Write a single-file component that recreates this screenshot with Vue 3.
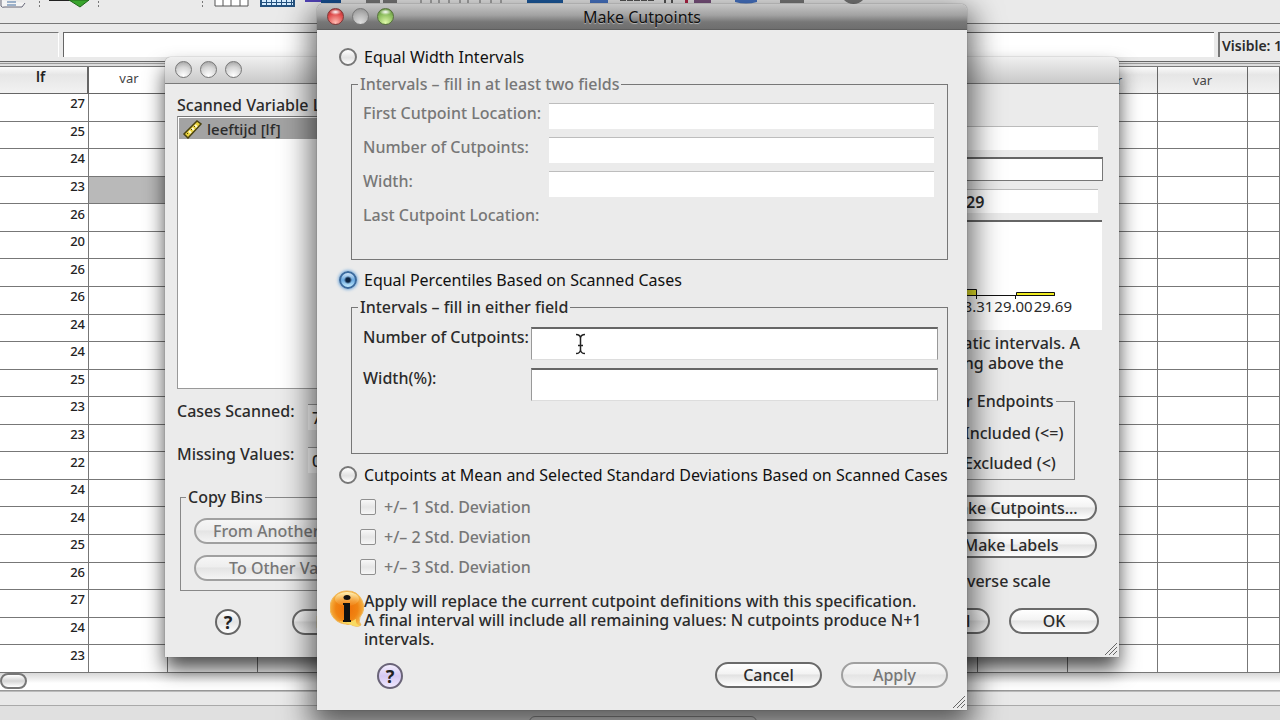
<script setup>
import { ref } from 'vue'

const values = [27, 25, 24, 23, 26, 20, 26, 26, 24, 24, 25, 23, 23, 22, 24, 24, 25, 26, 27, 24, 23]
const emptyColumns = 14
const selectedRow = 3

const method = ref('percentiles')
const fixedFields = [
  { id: 'first', label: 'First Cutpoint Location:' },
  { id: 'count', label: 'Number of Cutpoints:' },
  { id: 'width', label: 'Width:' },
]
const percentileFields = [
  { id: 'pcount', label: 'Number of Cutpoints:' },
  { id: 'pwidth', label: 'Width(%):' },
]
</script>

<template>
  <div class="desktop">
    <div class="toolbar">
      <svg class="tools" width="960" height="10" viewBox="0 0 960 10" aria-hidden="true">
        <path d="M1 0V6Q2 8 5 7H22L25 3" fill="#f4f4f4" stroke="#667" />
        <path d="M7 2h9M7 5h9" stroke="#446fa0" />
        <g fill="#777">
          <path d="M39 1h1v2h-1zM39 5h1v2h-1zM98 1h1v2h-1zM98 5h1v2h-1zM202 1h1v2h-1zM202 5h1v2h-1z" />
          <path d="M366 0h14v3h-14zM383 0h14v3h-14zM780 0h24v3h-24zM844 0h19q-4 4-9.500 4t-9.500-4z" />
        </g>
        <path d="M49 0h27" stroke="#222" stroke-width="2" />
        <path d="M69 0h20l-9 7z" fill="#39a52d" stroke="#20661b" />
        <path d="M215 0v6h33V0M223 0v6M231 0v6M240 0v6" fill="#fff" stroke="#555" />
        <path d="M260 0h35v7h-35z" fill="#24527f" />
        <path d="M262 1h31M262 4h31" stroke="#d4ecff" stroke-width="2" stroke-dasharray="4 1" />
        <path d="M305 0h16v2h-16z" fill="#5142b7" />
        <path d="M321 0h20v3h-20z" fill="#174f91" />
        <path d="M421 0v3M431 0v3M439 0v3M449 0v3M460 0v3M468 0v3M480 0v3M491 0v3M501 0v3" stroke="#666" />
        <path d="M527 0h36v3h-36z" fill="#1c5a9e" />
        <path d="M590 0h18v3h-18zM735 0h22v2q-11 3-22 0z" fill="#4774c4" />
        <path d="M620 0h34M665 0v3M672 0v3" stroke="#555" stroke-width="2" stroke-dasharray="6 1" />
        <path d="M685 0h3v3h-3z" fill="#b22345" />
        <path d="M694 0h17v3h-17z" fill="#79517d" />
      </svg>
    </div>
    <div class="formula">
      <div class="cellname"></div>
      <input class="cellvalue" type="text" aria-label="Cell value" />
      <div class="visible">Visible: 1</div>
    </div>
    <div class="rule"></div>

    <div class="sheet">
      <table>
        <colgroup>
          <col class="c-first" />
          <col class="c-second" />
          <col v-for="n in emptyColumns - 2" :key="n" class="c-var" />
          <col />
        </colgroup>
        <thead>
          <tr>
            <th class="lf">lf</th>
            <th v-for="n in emptyColumns" :key="n" :class="{ plain: n === 1 }">{{ n < emptyColumns ? 'var' : '' }}</th>
          </tr>
        </thead>
        <tbody>
          <tr v-for="(v, r) in values" :key="r">
            <td class="num">{{ v }}</td>
            <td v-for="n in emptyColumns" :key="n" :class="{ selected: n === 1 && r === selectedRow }"></td>
          </tr>
        </tbody>
      </table>
    </div>
    <div class="scroll"><span class="thumb"></span></div>
    <div class="status"></div>
    <div class="status low"></div>

    <section class="window back" aria-label="Visual Binning">
      <header class="titlebar idle">
        <span class="lights"><i class="light"></i><i class="light"></i><i class="light"></i></span>
      </header>
      <div class="back-body">
        <div class="left">
          <div class="line">Scanned Variable List:</div>
          <div class="list">
            <div class="item">
              <svg width="20" height="20" viewBox="0 0 20 20" aria-hidden="true">
                <path d="M2 15L15 2l4 3L6 19z" fill="#e9d23c" stroke="#4a4210" stroke-width="1.500" />
                <path d="M7 12l2 2M10 9l2 2M13 6l2 2" stroke="#fffbd0" stroke-width="2" />
                <path d="M5 14l1 1M9 10l1 1M12 7l1 1" stroke="#4a4210" />
              </svg>
              leeftijd [lf]
            </div>
          </div>
          <div class="stat"><label for="scanned">Cases Scanned:</label><input id="scanned" type="text" value="74" readonly /></div>
          <div class="stat"><label for="missing">Missing Values:</label><input id="missing" type="text" value="0" readonly /></div>
          <fieldset class="copy">
            <legend>Copy Bins</legend>
            <button type="button" class="pill" disabled>From Another Variable...</button>
            <button type="button" class="pill" disabled>To Other Variables...</button>
          </fieldset>
          <div class="left-foot">
            <button type="button" class="help">?</button>
            <button type="button" class="pill">Reset</button>
          </div>
        </div>
        <div class="right">
          <input class="soft" type="text" aria-label="Variable name" readonly />
          <input class="hard" type="text" aria-label="Variable label" />
          <input class="soft max" type="text" aria-label="Maximum" value="29" readonly />
          <div class="chart">
            <svg width="199" height="80" viewBox="0 0 199 80" aria-hidden="true">
              <path d="M0 73.500H155" stroke="#111" />
              <path d="M20 67.500H76.500V73.500H20z" fill="#e8e52a" stroke="#111" />
              <path d="M116.500 70.500H154.500V73.500H116.500z" fill="#f0ec20" stroke="#111" />
              <path d="M76.500 73v4M115.500 73v4" stroke="#111" />
            </svg>
            <div class="ticks"><span>28.31</span><span>29.00</span><span>29.69</span></div>
          </div>
          <p class="note">automatic intervals. A<br />including above the</p>
          <fieldset class="ends">
            <legend>Upper Endpoints</legend>
            <label><input type="radio" name="ends" checked />Included (&lt;=)</label>
            <label><input type="radio" name="ends" />Excluded (&lt;)</label>
          </fieldset>
          <button type="button" class="pill make">Make Cutpoints...</button>
          <button type="button" class="pill make">Make Labels</button>
          <label class="reverse"><input type="checkbox" />Reverse scale</label>
          <div class="right-foot">
            <button type="button" class="pill">Cancel</button>
            <button type="button" class="pill">OK</button>
          </div>
        </div>
      </div>
      <svg class="grip" width="14" height="14" viewBox="0 0 14 14" aria-hidden="true">
        <path d="M1 13L13 1M5 13l8-8M9 13l4-4" stroke="#666" />
      </svg>
    </section>

    <section class="window front" role="dialog" aria-label="Make Cutpoints">
      <header class="titlebar">
        <span class="lights"><i class="light red"></i><i class="light"></i><i class="light green"></i></span>
        <span class="title">Make Cutpoints</span>
      </header>
      <form class="front-body" @submit.prevent>
        <label class="choice"><input v-model="method" type="radio" name="method" value="width" />Equal Width Intervals</label>
        <fieldset class="group fixed" disabled>
          <legend>Intervals – fill in at least two fields</legend>
          <div v-for="f in fixedFields" :key="f.id" class="field">
            <label :for="f.id">{{ f.label }}</label><input :id="f.id" type="text" />
          </div>
          <div class="field"><span>Last Cutpoint Location:</span></div>
        </fieldset>
        <label class="choice second"><input v-model="method" type="radio" name="method" value="percentiles" />Equal Percentiles Based on Scanned Cases</label>
        <fieldset class="group percent">
          <legend>Intervals – fill in either field</legend>
          <div v-for="f in percentileFields" :key="f.id" class="field">
            <label :for="f.id">{{ f.label }}</label><input :id="f.id" type="text" />
          </div>
        </fieldset>
        <label class="choice third"><input v-model="method" type="radio" name="method" value="deviations" />Cutpoints at Mean and Selected Standard Deviations Based on Scanned Cases</label>
        <div class="checks">
          <label v-for="n in 3" :key="n"><input type="checkbox" disabled />+/– {{ n }} Std. Deviation</label>
        </div>
        <div class="info">
          <svg width="34" height="38" viewBox="0 0 34 38" aria-hidden="true">
            <defs>
              <radialGradient id="orb" cx="50%" cy="50%" r="55%">
                <stop offset="0" stop-color="#ee6f08" />
                <stop offset="0.600" stop-color="#f08412" />
                <stop offset="1" stop-color="#f6bd50" />
              </radialGradient>
              <linearGradient id="shine" x1="0" y1="0" x2="0" y2="1">
                <stop offset="0" stop-color="#fff3b8" />
                <stop offset="1" stop-color="#f7a840" stop-opacity="0.200" />
              </linearGradient>
            </defs>
            <path d="M17 1a16 16 0 0 1 13 26q-2 5 1 8-4 3-11-1-2 1-4 0A16.500 16.500 0 0 1 17 1z" fill="url(#orb)" stroke="#f0b95c" />
            <ellipse cx="17" cy="9" rx="12" ry="7" fill="url(#shine)" />
            <path d="M9 31q10 3 17-2-1 5 4 7-5 1-11-2-6 0-10-3z" fill="#f8da62" />
            <ellipse cx="17" cy="7.500" rx="3.500" ry="2.500" fill="#111" />
            <path d="M13 13h7v17h1v2h-8v-2h1V15h-1z" fill="#111" />
          </svg>
          <p>Apply will replace the current cutpoint definitions with this specification.<br />A final interval will include all remaining values: N cutpoints produce N+1 intervals.</p>
        </div>
        <div class="foot">
          <button type="button" class="help violet">?</button>
          <button type="button" class="pill">Cancel</button>
          <button type="submit" class="pill" disabled>Apply</button>
        </div>
      </form>
      <svg class="ibeam" width="11" height="22" viewBox="0 0 11 22" aria-hidden="true">
        <path d="M1 1.500Q5 1.500 5.500 5Q6 1.500 10 1.500M5.500 4V18M1 20.500Q5 20.500 5.500 17Q6 20.500 10 20.500M3 12.500H8" fill="none" stroke="#fff" stroke-width="3" />
        <path d="M1 1.500Q5 1.500 5.500 5Q6 1.500 10 1.500M5.500 4V18M1 20.500Q5 20.500 5.500 17Q6 20.500 10 20.500M3 12.500H8" fill="none" stroke="#222" stroke-width="1.500" />
      </svg>
      <svg class="grip" width="14" height="14" viewBox="0 0 14 14" aria-hidden="true">
        <path d="M1 13L13 1M5 13l8-8M9 13l4-4" stroke="#666" />
      </svg>
    </section>
    <div class="behind"></div>
  </div>
</template>

<style>
html, body, #app { height: 100%; margin: 0; }
body { overflow: hidden; }
</style>

<style scoped>
* { box-sizing: border-box; }
.desktop {
  position: relative;
  display: flex;
  flex-direction: column;
  height: 100%;
  overflow: hidden;
  background: #eaeaea;
  font-family: "Lucida Grande", "Noto Sans", "Open Sans", sans-serif;
  font-size: 16px;
  font-weight: 500;
  line-height: 20px;
  color: #2b2b2b;
}
input, button { font: inherit; color: inherit; margin: 0; }
input[type="text"] { appearance: none; border: 0; border-radius: 0; outline: 0; min-width: 0; background: #fff; padding: 0 4px; }
fieldset { margin: 0; min-width: 0; border: 1px solid #8a8a8a; }
legend { padding: 0 2px; white-space: nowrap; }
p { margin: 0; }

.toolbar { flex: none; height: 24px; border-bottom: 1px solid #777; }
.tools { display: block; }
.formula { flex: none; display: flex; gap: 4px; height: 37px; padding: 8px 0 4px; }
.cellname { width: 59px; border-top: 1px solid #777; border-right: 1px solid #fff; }
.formula .cellvalue { flex: 1; border-top: 1px solid #666; border-left: 1px solid #666; }
.visible { width: 62px; border-top: 1px solid #666; border-left: 2px solid #777; padding: 3px 0 0 2px; font-size: 14px; font-weight: 600; white-space: nowrap; overflow: hidden; }
.rule { flex: none; height: 6px; border-top: 1px solid #666; border-bottom: 1px solid #777; background: linear-gradient(#ddd 25%, #999 25%, #999 50%, #ddd 50%); }

.sheet { flex: 1; min-height: 0; background: #fff; }
table { width: 100%; height: 100%; table-layout: fixed; border-collapse: separate; border-spacing: 0; }
.c-first { width: 89px; }
.c-second { width: 79px; }
.c-var { width: 90px; }
th { height: 26px; padding: 0; border-right: 1px solid #666; border-bottom: 1px solid #666; background: linear-gradient(#fafafa, #e6e6e6 30%, #f2f2f2); font-size: 13px; font-weight: 400; color: #444; }
th.lf { padding: 0 6px 6px 0; border-right-width: 2px; font-size: 14px; font-weight: 600; color: #222; }
th.plain { padding: 0 0 4px 2px; background: #fff; }
td { padding: 0; border-right: 1px solid #777; border-bottom: 1px solid #777; }
td.num { padding: 0 3px 8px 0; text-align: right; font-size: 13px; line-height: 14px; color: #222; }
td.selected { background: #b9b9b9; }
.scroll { flex: none; height: 18px; background: linear-gradient(#d8d8d8, #fff 60%); border-bottom: 1px solid #999; }
.thumb { display: block; width: 27px; height: 16px; border: 2px solid #777; border-radius: 8px; background: linear-gradient(#fff, #d5d5d5 50%, #fff); }
.status { flex: none; height: 15px; border-top: 1px solid #bbb; border-bottom: 1px solid #aaa; background: #e9e9e9; }
.status.low { height: 14px; border: 0; background: #e0e0e0; }

.window { position: absolute; background: #ebebeb; border-radius: 6px 6px 0 0; }
.titlebar { position: relative; display: flex; align-items: center; justify-content: center; height: 26px; border-radius: 6px 6px 0 0; border-bottom: 1px solid #5e5e5e; background: linear-gradient(#c6c6c6, #a2a2a2 45%, #777 72%, #6e6e6e); }
.titlebar.idle { height: 27px; border-bottom: 1px solid #7a7a7a; background: linear-gradient(#f0f0f0, #c9c9c9); }
.title { color: #111; font-weight: 400; line-height: 24px; text-shadow: 0 1px 1px #bbb; }
.lights { position: absolute; left: 10px; top: 4px; display: flex; gap: 8px; }
.light { width: 17px; height: 17px; border: 1px solid #777; border-radius: 50%; background: radial-gradient(circle at 50% 90%, #ddd, #b5b5b5 55%, #8c8c8c); }
.idle .light { background: radial-gradient(circle at 50% 90%, #fff, #d6d6d6 55%, #999); }
.light.red { border-color: #7d3838; background: radial-gradient(ellipse 6px 3px at 50% 20%, #fff, transparent), radial-gradient(circle at 50% 90%, #ffb9b0, #dd4848 60%, #a32626); }
.light.green { border-color: #55703c; background: radial-gradient(ellipse 6px 3px at 50% 20%, #fff, transparent), radial-gradient(circle at 50% 90%, #def9a8, #86b858 60%, #4e7c2b); }

.pill { height: 26px; padding: 0; border: 2px solid #6a6a6a; border-radius: 13px; background: linear-gradient(#fff, #f3f3f3 45%, #e2e2e2 50%, #fff); line-height: 20px; white-space: nowrap; }
.pill:disabled { border-color: #a0a0a0; color: #777; background: linear-gradient(#f6f6f6, #eee 45%, #e4e4e4 50%, #f4f4f4); }
.help { width: 26px; height: 26px; padding: 0; border: 2px solid #666; border-radius: 50%; background: linear-gradient(#fff, #e4e4e4 50%, #fff); font-size: 18px; font-weight: 700; line-height: 20px; color: #222; }
.help.violet { border-color: #6a6478; background: linear-gradient(#f4efff, #d5c8f3 50%, #efe8ff); }
input[type="radio"] { appearance: none; flex: none; width: 18px; height: 18px; border: 2px solid #777; border-radius: 50%; background: linear-gradient(#fff, #e2e2e2 55%, #fff); }
input[type="checkbox"] { appearance: none; flex: none; width: 16px; height: 16px; border: 1px solid #8f8f8f; border-radius: 2px; background: linear-gradient(#f8f8f8, #e6e6e6 50%, #f6f6f6); }
.grip { position: absolute; right: 1px; bottom: 1px; }

.back { left: 165px; top: 57px; width: 954px; box-shadow: 0 0 1px #555, 0 12px 20px rgba(0, 0, 0, 0.700); }
.back-body { display: flex; justify-content: space-between; padding: 11px 16px 22px 12px; }
.left { width: 246px; }
.list { height: 273px; border: 1px solid #999; border-top-color: #777; background: #fff; padding: 1px; }
.item { display: flex; align-items: center; gap: 5px; height: 21px; padding-left: 3px; background: #a3a3a3; font-size: 15px; }
.left .line { height: 21px; }
.stat { display: flex; height: 43px; }
.stat label { flex: none; width: 131px; line-height: 20px; }
.stat input { width: 90px; height: 26px; margin-top: 3px; border-top: 1px solid #999; }
.list + .stat { margin-top: 12px; }
.copy { display: flex; flex-direction: column; gap: 11px; margin-left: 3px; padding: 11px 0 9px 13px; border-color: #888; }
.copy legend { margin-left: -8px; }
.copy .pill { width: 224px; }
.left-foot { display: flex; align-items: center; margin-top: 18px; padding-left: 38px; gap: 51px; }
.left-foot .pill { width: 90px; }

.right { width: 203px; display: flex; flex-direction: column; }
.right > .soft { height: 24px; margin: 31px 5px 0 0; border-top: 1px solid #bbb; }
.right > .hard { height: 24px; margin: 7px 0 8px; border: 1px solid #777; border-top: 2px solid #666; }
.right > .max { margin-top: 0; padding-left: 66px; font-weight: 600; }
.chart { height: 110px; margin: 7px 1px 0 0; border-top: 2px solid #666; background: #fff; overflow: hidden; }
.chart svg { display: block; margin-bottom: -4px; }
.ticks { display: flex; gap: 1px; padding-left: 55px; font-size: 15px; font-weight: 400; line-height: 16px; }
.note { margin-top: 3px; padding-left: 13px; white-space: nowrap; }
.ends { margin: 18px 28px 15px 0; padding: 7px 0 1px 37px; }
.ends legend { margin-left: -15px; }
.ends label { display: flex; align-items: center; gap: 8px; height: 30px; white-space: nowrap; }
.make { width: 172px; margin: 0 0 11px 25px; }
.reverse { display: flex; align-items: center; gap: 8px; height: 20px; margin: 2px 0 0 24px; white-space: nowrap; }
.right-foot { display: flex; gap: 19px; margin: 17px 4px 0 0; }
.right-foot .pill { flex: 1; }

.behind { position: absolute; left: 529px; bottom: -10px; width: 228px; height: 14px; border: 1px solid #505050; border-radius: 6px; }

.front { left: 317px; top: 4px; width: 650px; box-shadow: 0 0 1px #333, 0 12px 30px 6px rgba(0, 0, 0, 0.600); }
.front-body { padding: 17px 19px 22px 22px; }
.choice { display: flex; align-items: center; gap: 7px; height: 20px; font-weight: 400; color: #111; white-space: nowrap; }
.choice.second { margin-top: 10px; }
.choice.third { margin-top: 11px; }
.choice input:checked { border-color: #3a6a9e; background: radial-gradient(circle, #0c2340 0 2px, transparent 4px), linear-gradient(#cfe4f8, #6aa9df 50%, #c4ecff); box-shadow: 0 0 3px 1px #7fb0dd; }
.group { margin: 7px 0 0 12px; border-color: #777; }
.fixed { padding: 9px 13px 20px 11px; color: #777; }
.fixed legend, .percent legend { margin-left: -5px; }
.field { display: flex; align-items: flex-start; height: 34px; white-space: nowrap; }
.field label { flex: none; width: 186px; }
.field input { flex: 1; height: 26px; }
.fixed .field input { border-top: 1px solid #bdbdbd; }
.percent { padding: 10px 9px 44px 11px; }
.percent .field { height: 41px; }
.percent .field label { width: 168px; }
.percent .field input { height: 33px; border: 1px solid #999; border-top: 2px solid #666; border-bottom-color: #ddd; }
.checks { margin: 7px 0 0 21px; color: #777; }
.checks label { display: flex; align-items: center; gap: 8px; height: 30px; }
.info { display: flex; margin: 8px 0 0 -9px; }
.info svg { flex: none; }
.info p { flex: 1; padding-top: 2px; line-height: 19px; }
.foot { display: flex; gap: 19px; margin-top: 13px; }
.foot .pill { width: 107px; }
.foot .help { margin: 1px auto -1px 38px; }
.ibeam { position: absolute; left: 258px; top: 329px; }
</style>
